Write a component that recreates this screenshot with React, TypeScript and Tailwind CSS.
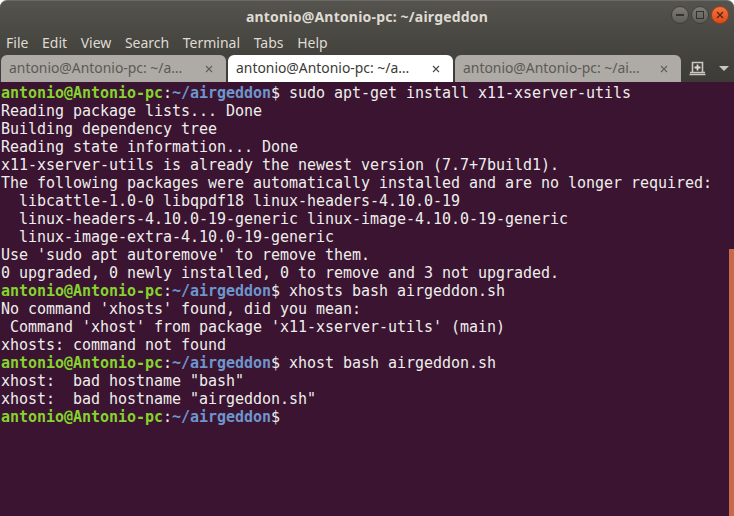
import React from "react";

const UI = "font-['Noto_Sans',sans-serif]";

type Part = { t: string; c?: string };

const prompt = (cmd: string): Part[] => [
  { t: "antonio@Antonio-pc", c: "text-[#85d42e] font-bold" },
  { t: ":" },
  { t: "~/airgeddon", c: "text-[#6d96cc] font-bold" },
  { t: "$ " + cmd },
];

const lines: (string | Part[])[] = [
  prompt("sudo apt-get install x11-xserver-utils"),
  "Reading package lists... Done",
  "Building dependency tree",
  "Reading state information... Done",
  "x11-xserver-utils is already the newest version (7.7+7build1).",
  "The following packages were automatically installed and are no longer required:",
  "  libcattle-1.0-0 libqpdf18 linux-headers-4.10.0-19",
  "  linux-headers-4.10.0-19-generic linux-image-4.10.0-19-generic",
  "  linux-image-extra-4.10.0-19-generic",
  "Use 'sudo apt autoremove' to remove them.",
  "0 upgraded, 0 newly installed, 0 to remove and 3 not upgraded.",
  prompt("xhosts bash airgeddon.sh"),
  "No command 'xhosts' found, did you mean:",
  " Command 'xhost' from package 'x11-xserver-utils' (main)",
  "xhosts: command not found",
  prompt("xhost bash airgeddon.sh"),
  'xhost:  bad hostname "bash"',
  'xhost:  bad hostname "airgeddon.sh"',
  prompt(""),
];

const menu = ["File", "Edit", "View", "Search", "Terminal", "Tabs", "Help"];

const Tab = ({ title, active, w }: { title: string; active?: boolean; w: string }) => (
  <div
    className={`${w} h-[27px] flex items-center justify-between pl-[8px] pr-[13px] rounded-t-[6px] text-[13.9px] ${
      active ? "bg-white text-[#3c3b37]" : "bg-[#aeaaa5] text-[#5c5a56]"
    }`}
  >
    <span className="whitespace-nowrap">{title}</span>
    <svg width="8" height="8" viewBox="0 0 8 8" className="shrink-0">
      <path d="M1 1l6 6M7 1L1 7" stroke={active ? "#4a4944" : "#5f5d59"} strokeWidth="1.1" fill="none" />
    </svg>
  </div>
);

const WinButton = ({ children, close }: { children: React.ReactNode; close?: boolean }) => (
  <div
    className={`w-[18px] h-[18px] rounded-full flex items-center justify-center border ${
      close
        ? "bg-gradient-to-b from-[#f0743e] to-[#df4a16] border-[#a83c14]"
        : "bg-gradient-to-b from-[#7d7b74] to-[#5f5d58] border-[#3f3e3a]"
    }`}
  >
    {children}
  </div>
);

export default function App() {
  return (
    <div className={`relative w-[734px] h-[516px] overflow-hidden bg-white flex flex-col ${UI}`}>
      <div className="h-[82px] flex flex-col rounded-t-[7px] bg-gradient-to-b from-[#54534d] via-[#474641] to-[#3c3b37] border-t border-[#6b6a64]">
        <div className="relative h-[29px] flex items-center justify-center pt-[1px]">
          <span className="text-[14px] font-bold text-[#dfdbd2] tracking-[0.2px]">antonio@Antonio-pc: ~/airgeddon</span>
          <div className="absolute right-[5px] top-[5px] flex gap-[2px]">
            <WinButton>
              <div className="w-[8px] h-[1.5px] bg-[#33322f]" />
            </WinButton>
            <WinButton>
              <div className="w-[8px] h-[8px] border border-[#33322f]" />
            </WinButton>
            <WinButton close>
              <svg width="8" height="8" viewBox="0 0 8 8">
                <path d="M1 1l6 6M7 1L1 7" stroke="#5e2410" strokeWidth="1.4" fill="none" />
              </svg>
            </WinButton>
          </div>
        </div>
        <div className="h-[25px] flex items-center pl-[6px] gap-[13.6px] text-[14px] text-[#dfdbd2]">
          {menu.map((m) => (
            <span key={m}>{m}</span>
          ))}
        </div>
        <div className="h-[27px] flex items-end pl-[1px]">
          <Tab title="antonio@Antonio-pc: ~/a…" w="w-[225px]" />
          <div className="w-[2px]" />
          <Tab title="antonio@Antonio-pc: ~/a…" active w="w-[225px]" />
          <div className="w-[2px]" />
          <Tab title="antonio@Antonio-pc: ~/ai…" w="w-[226px]" />
          <div className="flex items-center h-[27px] pl-[8px] gap-[13px]">
            <svg width="17" height="15" viewBox="0 0 17 15" fill="none">
              <path d="M3.5 11V1.5h10V11" stroke="#c9c6bf" strokeWidth="1.6" />
              <path d="M0.5 13.5h16M1 11.5h15" stroke="#c9c6bf" strokeWidth="1.6" />
              <path d="M8.5 3.5v6M5.5 6.5h6" stroke="#dfdbd2" strokeWidth="1.8" />
            </svg>
            <svg width="10" height="5" viewBox="0 0 10 5">
              <path d="M0 0h10L5 5z" fill="#c9c6bf" />
            </svg>
          </div>
        </div>
      </div>
      <div className="relative flex-1 bg-[#3b1431] pl-[1px] pt-[2px] font-['DejaVu_Sans_Mono',monospace] text-[15px] leading-[18px] text-[#eeeeec] tracking-[-0.03px]">
        {lines.map((line, i) => (
          <div key={i} className="h-[18px] whitespace-pre">
            {typeof line === "string"
              ? line
              : line.map((p, j) => (
                  <span key={j} className={p.c}>
                    {p.t}
                  </span>
                ))}
          </div>
        ))}
        <div className="absolute right-0 top-[167px] bottom-0 w-[5px] bg-[#c8694a]" />
      </div>
    </div>
  );
}
